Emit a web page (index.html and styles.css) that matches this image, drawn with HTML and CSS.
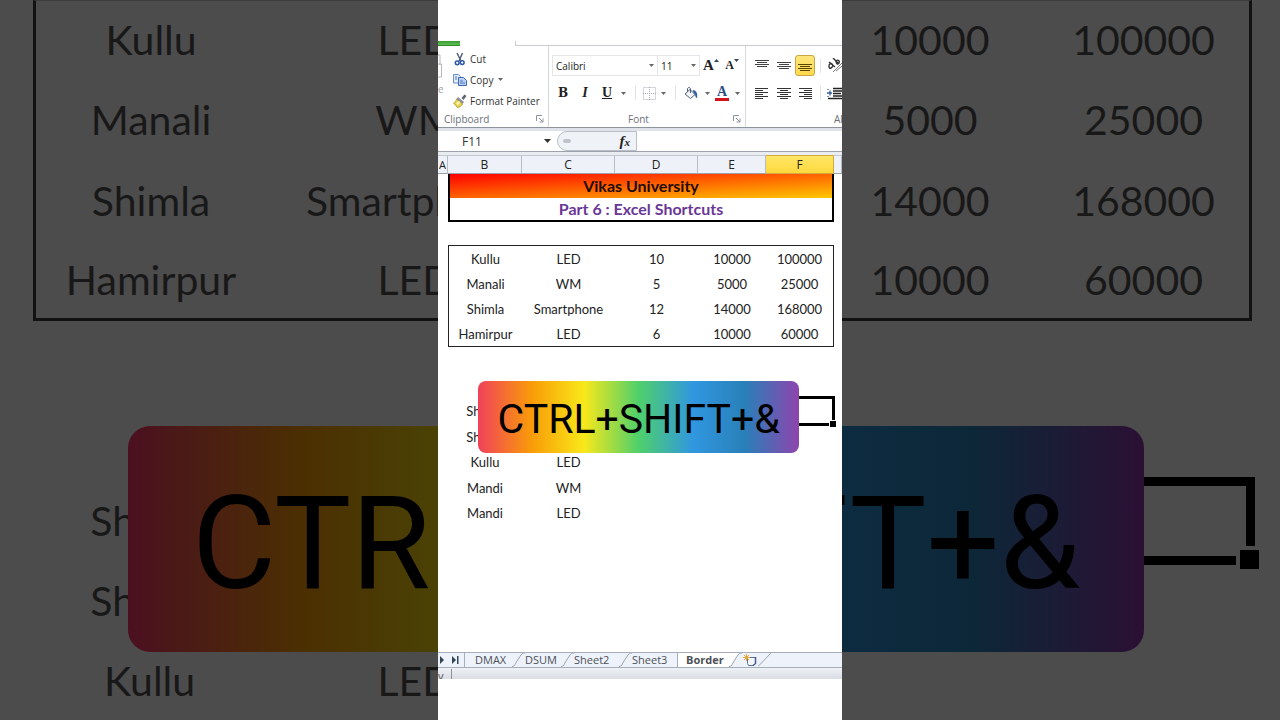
FILE: index.html
```html
<!DOCTYPE html>
<html lang="en">
<head>
<meta charset="utf-8">
<title>Excel Shortcuts</title>
<link rel="stylesheet" href="styles.css">
</head>
<body>
<div class="stage">
  <div class="backdrop" aria-hidden="true">
    <table class="big">
      <colgroup><col class="big-b"><col class="big-c"><col class="big-d"><col class="big-e"><col class="big-f"></colgroup>
      <tbody class="big-box">
        <tr><td>Kullu</td><td>LED</td><td></td><td>10000</td><td>100000</td></tr>
        <tr><td>Manali</td><td>WM</td><td></td><td>5000</td><td>25000</td></tr>
        <tr><td>Shimla</td><td>Smartphone</td><td></td><td>14000</td><td>168000</td></tr>
        <tr><td>Hamirpur</td><td>LED</td><td></td><td>10000</td><td>60000</td></tr>
      </tbody>
      <tbody class="big-rest">
        <tr><td></td></tr>
        <tr><td></td></tr>
        <tr><td>Shimla</td><td></td><td></td><td></td><td class="active big-active"></td></tr>
        <tr><td>Shimla</td></tr>
        <tr><td>Kullu</td><td>LED</td></tr>
      </tbody>
    </table>
    <div class="banner big-banner">CTRL+SHIFT+&amp;</div>
  </div>

  <main class="clip">
    <div class="ribbon">
      <div class="ribbon-top"><span class="file-tab"></span><span class="tab-gap"></span><span class="tab-line"></span></div>
      <div class="groups">
        <section class="group clipboard">
          <div class="clip-body">
            <div class="paste">
              <svg width="4" height="28" viewBox="0 0 4 28"><path d="M0 1h2v10M0 10h3.500v13H0" fill="none" stroke="#b5b8bd"/></svg>
              <span>e</span>
            </div>
            <div class="clip-list">
              <button class="cmd">
                <svg width="14" height="14" viewBox="0 0 14 14"><path d="M4 1l4 8M9.500 1L6 9" stroke="#51607a" stroke-width="1.500" fill="none"/><circle cx="4.200" cy="10.800" r="1.900" fill="none" stroke="#2c5aa8" stroke-width="1.500"/><circle cx="9.200" cy="10.600" r="1.900" fill="none" stroke="#2c5aa8" stroke-width="1.500"/></svg>
                Cut</button>
              <button class="cmd">
                <svg width="14" height="14" viewBox="0 0 14 14"><path d="M.5 1.500h5l2 2v6.500h-7z" fill="#dfeafb" stroke="#6c8cc4"/><path d="M5.500 4.500h5l3 3v5h-8z" fill="#b9d0f2" stroke="#3f68b0"/><path d="M7 8h3M7 10h5M2 4h2M2 6h2" stroke="#4b78c4"/></svg>
                Copy
                <svg class="arrow" width="5" height="3" viewBox="0 0 5 3"><path d="M0 0h5L2.500 3z" fill="#666"/></svg></button>
              <button class="cmd">
                <svg width="14" height="14" viewBox="0 0 14 14"><path d="M8.500 4l3-3.500 2 1.500-3 4z" fill="#5d6473"/><path d="M5 3l6 5-1.500 2L3.500 5z" fill="#8a8f9c"/><path d="M3.500 5L9.500 10c-1 2-3 3.500-5 3.500L.5 9C2 8.500 3 7 3.500 5z" fill="#e9d34a" stroke="#a08a20" stroke-width=".7"/><path d="M3 9l3-2 1.500 1.500-3 3z" fill="#fbf3a8"/></svg>
                Format Painter</button>
            </div>
          </div>
          <div class="group-name"><span>Clipboard</span>
            <svg class="launch" width="8" height="8" viewBox="0 0 8 8"><path d="M.5 6V.5H6M3 3l4 4M7 3.500V7H3.500" fill="none" stroke="#8d939c"/></svg></div>
        </section>

        <section class="group font">
          <div class="row">
            <select class="combo face" aria-label="Font"><option>Calibri</option></select>
            <select class="combo size" aria-label="Font size"><option>11</option></select>
            <button class="tool w22 grow" aria-label="Grow font">A<svg width="5" height="3" viewBox="0 0 5 3"><path d="M0 3h5L2.500 0z" fill="#345"/></svg></button>
            <button class="tool w20 shrink" aria-label="Shrink font">A<svg width="5" height="3" viewBox="0 0 5 3"><path d="M0 0h5L2.500 3z" fill="#345"/></svg></button>
          </div>
          <div class="row">
            <button class="tool w22 b">B</button><button class="tool w22 i">I</button><button class="tool w22 u">U</button>
            <span class="tool w10"><svg width="5" height="3" viewBox="0 0 5 3"><path d="M0 0h5L2.500 3z" fill="#666"/></svg></span>
            <span class="tool w14"><i class="bar"></i></span>
            <button class="tool w14" aria-label="Borders"><svg width="13" height="13" viewBox="0 0 13 13"><path d="M.5.5h12v12H.5zM6.500 0v13M0 6.500h13" fill="none" stroke="#a9acb2" stroke-dasharray="1 1"/></svg></button>
            <span class="tool w14"><svg width="5" height="3" viewBox="0 0 5 3"><path d="M0 0h5L2.500 3z" fill="#666"/></svg></span>
            <span class="tool w10"><i class="bar"></i></span>
            <button class="tool w22" aria-label="Fill colour"><svg width="14" height="13" viewBox="0 0 14 13"><path d="M6 2.500l5 5-4.500 4L1 7z" fill="#f4f6fa" stroke="#50617e"/><path d="M3.500 5V2c0-2 3-2 3 0v4" fill="none" stroke="#50617e"/><path d="M8.500 3c3.500 0 5.500 3 4.500 8-2-.5-1.500-4-3-4.500z" fill="#2f5fa8"/></svg></button>
            <span class="tool w10"><svg width="5" height="3" viewBox="0 0 5 3"><path d="M0 0h5L2.500 3z" fill="#666"/></svg></span>
            <button class="tool w20 colour" aria-label="Font colour">A</button>
            <span class="tool w10"><svg width="5" height="3" viewBox="0 0 5 3"><path d="M0 0h5L2.500 3z" fill="#666"/></svg></span>
          </div>
          <div class="group-name"><span>Font</span>
            <svg class="launch" width="8" height="8" viewBox="0 0 8 8"><path d="M.5 6V.5H6M3 3l4 4M7 3.500V7H3.500" fill="none" stroke="#8d939c"/></svg></div>
        </section>

        <section class="group align">
          <div class="row">
            <button class="tool w22" aria-label="Top align"><svg width="14" height="13" viewBox="0 0 14 13"><path d="M0 1.500h14M2 3.500h10M0 5.500h14M2 7.500h10" stroke="#444"/></svg></button>
            <button class="tool w22" aria-label="Middle align"><svg width="14" height="13" viewBox="0 0 14 13"><path d="M0 3.500h14M2 5.500h10M0 7.500h14M2 9.500h10" stroke="#444"/></svg></button>
            <button class="tool w20 on" aria-label="Bottom align"><svg width="14" height="13" viewBox="0 0 14 13"><path d="M0 5.500h14M2 7.500h10M0 9.500h14M2 11.500h10" stroke="#5a4300"/></svg></button>
            <span class="tool w10"><i class="bar"></i></span>
            <button class="tool w20" aria-label="Orientation"><svg width="16" height="15" viewBox="0 0 16 15"><path d="M6 14L15 5M9 13l6-5" fill="none" stroke="#777"/><path d="M2 4l6 5M2 8c0-2 2-3 3-2s1 3-1 4-2-1-2-2zM6 0l6 6M9 3c2-2 4 0 3 2s-3 1-3-2z" fill="none" stroke="#333" stroke-width="1.400"/></svg></button>
          </div>
          <div class="row">
            <button class="tool w22" aria-label="Align left"><svg width="14" height="13" viewBox="0 0 14 13"><path d="M0 1.500h13M0 3.500h8M0 5.500h13M0 7.500h8M0 9.500h13M0 11.500h8" stroke="#333"/></svg></button>
            <button class="tool w22" aria-label="Centre"><svg width="14" height="13" viewBox="0 0 14 13"><path d="M0 1.500h14M3 3.500h8M0 5.500h14M3 7.500h8M0 9.500h14M3 11.500h8" stroke="#333"/></svg></button>
            <button class="tool w20" aria-label="Align right"><svg width="14" height="13" viewBox="0 0 14 13"><path d="M1 1.500h13M6 3.500h8M1 5.500h13M6 7.500h8M1 9.500h13M6 11.500h8" stroke="#333"/></svg></button>
            <span class="tool w10"><i class="bar"></i></span>
            <button class="tool w20" aria-label="Decrease indent"><svg width="16" height="13" viewBox="0 0 16 13"><path d="M6 1.500h10M6 4h10M6 6.500h8M6 9h10M1 11.500h15" stroke="#222" stroke-width="1.500"/><path d="M0 6h5M3 3.500v5M1 2v1M1 9v1" stroke="#345f9e" stroke-width="1.300"/></svg></button>
          </div>
          <div class="group-name"><span>Alignment</span></div>
        </section>
      </div>
    </div>

    <div class="formula">
      <input class="name-box" aria-label="Name box" value="F11">
      <svg class="name-arrow" width="7" height="4" viewBox="0 0 7 4"><path d="M0 0h7L3.500 4z" fill="#333"/></svg>
      <div class="fx"><i class="knob"></i><button class="fx-btn" aria-label="Insert function"><i>f<small>x</small></i></button></div>
      <input class="entry" aria-label="Formula">
    </div>

    <div class="sheet">
      <table class="cells">
        <colgroup><col class="c-a"><col class="c-b"><col class="c-c"><col class="c-d"><col class="c-e"><col class="c-e"><col class="c-g"></colgroup>
        <thead><tr><th>A</th><th>B</th><th>C</th><th>D</th><th>E</th><th class="sel">F</th><th></th></tr></thead>
        <tbody class="heads">
          <tr><td></td><td colspan="5" class="title">Vikas University</td></tr>
          <tr><td></td><td colspan="5" class="subtitle">Part 6 : Excel Shortcuts</td></tr>
          <tr><td></td></tr>
        </tbody>
        <tbody class="data boxed">
          <tr><td></td><td>Kullu</td><td>LED</td><td>10</td><td>10000</td><td>100000</td></tr>
          <tr><td></td><td>Manali</td><td>WM</td><td>5</td><td>5000</td><td>25000</td></tr>
          <tr><td></td><td>Shimla</td><td>Smartphone</td><td>12</td><td>14000</td><td>168000</td></tr>
          <tr><td></td><td>Hamirpur</td><td>LED</td><td>6</td><td>10000</td><td>60000</td></tr>
        </tbody>
        <tbody class="data">
          <tr><td></td></tr>
          <tr><td></td></tr>
          <tr><td></td><td>Shimla</td><td></td><td></td><td></td><td class="active"></td></tr>
          <tr><td></td><td>Shimla</td></tr>
          <tr><td></td><td>Kullu</td><td>LED</td></tr>
          <tr><td></td><td>Mandi</td><td>WM</td></tr>
          <tr><td></td><td>Mandi</td><td>LED</td></tr>
        </tbody>
      </table>
      <div class="banner small-banner">CTRL+SHIFT+&amp;</div>
    </div>

    <nav class="tabs">
      <button class="nav" aria-label="Next sheet"><svg width="4" height="8" viewBox="0 0 4 8"><path d="M0 0v8l4-4z" fill="#345"/></svg></button>
      <button class="nav last" aria-label="Last sheet"><svg width="7" height="8" viewBox="0 0 7 8"><path d="M0 0v8l4-4zM5 0h1.500v8H5z" fill="#345"/></svg></button>
      <button class="tab first">DMAX</button>
      <svg class="slant" viewBox="0 0 13 14"><path d="M0 13.500C3 13.500 3 11 5 8L9 2c1-1.500 2-2 4-2" stroke="#9ba3af" fill="none"/></svg>
      <button class="tab">DSUM</button>
      <svg class="slant" viewBox="0 0 13 14"><path d="M0 13.500C3 13.500 3 11 5 8L9 2c1-1.500 2-2 4-2" stroke="#9ba3af" fill="none"/></svg>
      <button class="tab wide">Sheet2</button>
      <svg class="slant" viewBox="0 0 13 14"><path d="M0 13.500C3 13.500 3 11 5 8L9 2c1-1.500 2-2 4-2" stroke="#9ba3af" fill="none"/></svg>
      <button class="tab wide">Sheet3</button>
      <button class="tab current">Border</button>
      <svg class="slant" viewBox="0 0 13 14"><path d="M0 0h13C11 0 10 .5 9 2L5 8c-2 3-2 5.500-5 5.500z" fill="#fff"/><path d="M0 13.500C3 13.500 3 11 5 8L9 2c1-1.500 2-2 4-2" stroke="#9ba3af" fill="none"/></svg>
      <button class="new" aria-label="Insert worksheet"><svg width="14" height="12" viewBox="0 0 14 12"><path d="M4.500 3.500h8v6l-2 2h-5l-1-2z" fill="#f5f8ff" stroke="#5d6ea3"/><path d="M12.500 3v6.500l-2.500 2" fill="none" stroke="#4a5a95" stroke-width="1.500"/><path d="M3.500 0v7M0 3.500h7M1 1l5 5M6 1L1 6" stroke="#e0a63a"/></svg></button>
      <svg class="slant" viewBox="0 0 13 14"><path d="M0 13.500L13 0" stroke="#9ba3af" fill="none"/></svg>
    </nav>
    <div class="status"><span>y</span></div>
  </main>
</div>
</body>
</html>
```
FILE: styles.css
```css
* { box-sizing: border-box; }
body { margin: 0; font-family: "Open Sans", "Noto Sans", sans-serif; color: #333; }
button, input, select { font: inherit; color: inherit; margin: 0; padding: 0; border: 0; background: none; border-radius: 0; }
svg { display: block; flex: none; }
table { border-collapse: separate; border-spacing: 0; table-layout: fixed; }
td, th { padding: 0; text-align: center; white-space: nowrap; }

.stage {
  position: relative;
  display: grid;
  grid-template-columns: minmax(0, 438fr) minmax(0, 404fr) minmax(0, 438fr);
  min-height: 100vh;
  overflow: hidden;
}

/* enlarged, dimmed copy behind the clip */
.backdrop { position: absolute; inset: 0; overflow: hidden; background: #4c4c4c; padding: 0 28px 0 33px; }
.big { width: 100%; font-family: Lato, "Open Sans", sans-serif; font-size: 41px; line-height: 48px; color: #181818; }
.big-b { width: 233px; }
.big-c { width: 299px; }
.big-d { width: 257px; }
.big-e { width: 216px; }
.big-f { width: 214px; }
.big tr { height: 81px; }
.big .big-box tr:first-child { height: 79px; }
.big .big-box tr:last-child { height: 80px; }
.big .big-rest tr { height: 80px; }
.big-box td:first-child { border-left: 3px solid #121212; }
.big-box td:last-child { border-right: 3px solid #121212; }
.big-box tr:first-child td { border-top: 1px solid #3c3c3c; }
.big-box tr:last-child td { border-bottom: 3px solid #121212; }

.banner {
  position: absolute;
  display: flex;
  align-items: center;
  justify-content: center;
  font-family: Roboto, sans-serif;
  color: #000;
  white-space: nowrap;
  background: linear-gradient(90deg, #f0415a, #f99d07 17%, #f9e81a 33%, #4fd06b 50%, #3097e0 67%, #2980b9 83%, #8e44ad);
}
.small-banner { left: 10%; right: 43px; top: 226px; height: 72px; border-radius: 8px; font-size: 41px; padding-top: 4px; }
.big-banner {
  left: 10%; right: 136px; top: 426px; height: 226px; border-radius: 22px; font-size: 129px; padding-top: 8px;
  background: linear-gradient(90deg, #4b1020, #4b2f02 17%, #4a4505 33%, #183f20 50%, #0e2d43 67%, #0c2738 83%, #2b1034);
}

.active { position: relative; }
.active::before { content: ""; position: absolute; inset: -2px -1px -2px -2px; border: 3px solid #000; }
.active::after { content: ""; position: absolute; right: -2px; bottom: -3px; width: 6px; height: 6px; background: #000; border: 1px solid #fff; border-width: 1px 0 0 1px; }
.big-active::before { inset: -4px -3px -4px 0; border-width: 9px; }
.big-active::after { right: -7px; bottom: -8px; width: 19px; height: 19px; border: 4px solid #4c4c4c; border-width: 4px 0 0 4px; }

.clip { position: relative; grid-column: 2; display: flex; flex-direction: column; min-width: 0; overflow: hidden; background: #fff; padding: 41px 0; }

/* ribbon */
.ribbon { border-bottom: 1px solid #8e949c; }
.ribbon-top { display: flex; height: 5px; }
.file-tab { width: 22px; background: linear-gradient(#3a9a35, #5cbf50); border-bottom: 1px solid #2f8a2c; }
.tab-gap { width: 55px; }
.tab-line { flex: 1; border: 1px solid #c9cdd3; border-width: 0 0 1px 1px; }
.groups { display: flex; height: 81px; }
.group { display: flex; flex-direction: column; flex: none; border-right: 1px solid #d5d8dd; }
.clipboard { width: 111px; }
.font { width: 197px; padding-left: 3px; }
.align { flex: 1; min-width: 0; overflow: hidden; border-right: 0; padding-left: 5px; }
.group-name { display: flex; align-items: center; height: 17px; margin-top: auto; font-size: 10px; color: #6b7078; padding: 0 4px 0 6px; }
.group-name span { flex: 1; }
.font .group-name { padding-left: 0; }
.font .group-name span { text-align: center; padding-right: 8px; }
.align .group-name { padding-left: 83px; }
.clip-body { display: flex; padding-top: 2px; }
.paste { width: 15px; padding-top: 6px; font-size: 10px; line-height: 14px; color: #a0a3a8; }
.clip-list { display: flex; flex-direction: column; }
.cmd { display: flex; align-items: center; gap: 3px; height: 21px; font-size: 10px; white-space: nowrap; }
.arrow { margin-left: 2px; }
.row { display: flex; align-items: center; height: 27px; }
.row:first-child { margin-top: 6px; }
.row + .row { height: 28px; }
.combo {
  appearance: none; height: 21px; border: 1px solid #e4e6ea; padding-left: 3px; font-size: 10px; color: #222;
  background: url("data:image/svg+xml,%3Csvg xmlns='http://www.w3.org/2000/svg' width='5' height='3'%3E%3Cpath d='M0 0h5L2.500 3z' fill='%23666'/%3E%3C/svg%3E") no-repeat right 3px center;
}
.face { width: 106px; }
.size { width: 42px; border-left-width: 0; }
.tool { display: flex; align-items: center; justify-content: center; flex: none; height: 22px; font-family: "Liberation Serif", serif; font-size: 14px; font-weight: bold; color: #222; }
.w22 { width: 22px; }
.w20 { width: 20px; }
.w14 { width: 14px; }
.w10 { width: 10px; }
.bar { width: 1px; height: 14px; background: #e1e3e7; }
.grow { font-size: 15px; }
.shrink { font-size: 12px; }
.grow svg, .shrink svg { align-self: flex-start; margin-top: 4px; }
.b { font-family: "DejaVu Serif", serif; font-size: 12px; }
.i { font-style: italic; }
.u { text-decoration: underline; }
.colour { color: #2b4f86; line-height: 14px; background: linear-gradient(#d3121a, #d3121a) no-repeat center 16px / 14px 3px; padding-bottom: 3px; }
.on { background: linear-gradient(#fbe67a, #fdd94a); border: 1px solid #c9a544; border-radius: 3px; height: 21px; }

/* formula bar */
.formula { display: flex; align-items: center; height: 27px; background: linear-gradient(#dfe2e8 3px, #fff 3px, #fff 23px, #9da3ac 23px, #9da3ac 24px, #e9ecf0 24px); padding: 3px 0 4px; }
.name-box { width: 106px; padding-left: 24px; font-size: 12px; height: 20px; }
.name-arrow { margin-right: 6px; }
.fx { display: flex; align-items: center; justify-content: space-between; width: 80px; height: 20px; border: 1px solid #b9bec6; border-radius: 10px 0 0 10px; background: #eff2f7; padding: 0 6px 0 5px; }
.knob { width: 8px; height: 4px; border-radius: 2px; background: #bfc4cc; }
.fx-btn { font-family: "Liberation Serif", serif; font-weight: bold; font-size: 15px; line-height: 18px; color: #222; }
.fx-btn small { font-size: 11px; }
.entry { flex: 1; min-width: 0; height: 20px; }

/* sheet */
.sheet { position: relative; flex: 1; }
.cells { width: 100%; font-family: Lato, "Open Sans", sans-serif; font-size: 13px; line-height: 16px; color: #222; }
.c-a { width: 10px; }
.c-b { width: 74px; }
.c-c { width: 93px; }
.c-d { width: 83px; }
.c-e { width: 68px; }
.c-g { width: 8px; }
.cells th { height: 19px; font-family: "Open Sans", sans-serif; font-weight: normal; font-size: 12px; background: #eef1f7; border-right: 1px solid #b6bcc6; border-bottom: 1px solid #9aa1ac; border-top: 1px solid #c4c9d1; }
.cells th:first-child { font-size: 11px; }
.cells th.sel { background: linear-gradient(#ffe667, #ffd83d); border-color: #d3a93c; }
.heads tr { height: 24px; }
.heads tr:last-child { height: 23px; }
.title { border: 2px solid #000; border-width: 0 2px; background: linear-gradient(to bottom right, #f00, #ffc800); font-size: 16px; font-weight: bold; color: #220a08; }
.subtitle { border: 2px solid #000; border-top: 0; font-size: 16px; font-weight: bold; color: #6a3796; }
.data tr:nth-child(odd) { height: 26px; }
.data tr:nth-child(even) { height: 25px; }
.boxed td:nth-child(2) { border-left: 1px solid #222; }
.boxed td:last-child { border-right: 1px solid #222; }
.boxed tr:first-child td:not(:first-child) { border-top: 1px solid #222; }
.boxed tr:last-child td:not(:first-child) { border-bottom: 1px solid #222; }

/* sheet tabs and status bar */
.tabs { display: flex; align-items: stretch; height: 16px; background: #eef3fb; border: 1px solid #a7aeb9; border-width: 1px 0; font-size: 11px; line-height: 14px; color: #4c5056; }
.tabs button { display: flex; align-items: center; justify-content: center; flex: none; }
.tabs .nav { width: 8px; }
.tabs .last { width: 19px; border-right: 1px solid #a7aeb9; }
.tabs .tab { width: 36px; justify-content: flex-start; }
.tabs .first { width: 47px; padding-left: 10px; }
.tabs .wide { width: 45px; }
.tabs .current { width: 52px; padding-left: 8px; background: #fff; border-left: 1px solid #a7aeb9; font-weight: bold; }
.slant { width: 13px; height: 14px; }
.new { width: 16px; }
.status { display: flex; height: 11px; overflow: hidden; background: linear-gradient(#eef1f5, #d9dde3); font-size: 11px; line-height: 14px; color: #555; }
.status span { width: 14px; border-right: 1px solid #8e949c; margin-top: 1px; }
```
